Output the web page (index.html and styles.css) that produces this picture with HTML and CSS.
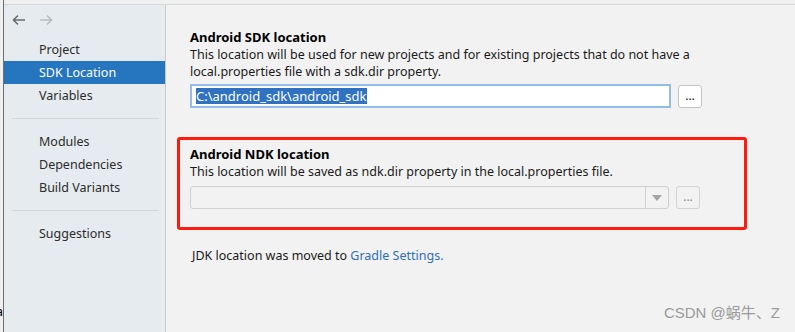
FILE: index.html
```html
<!DOCTYPE html>
<html>
<meta charset="utf-8">
<head>
  <link rel="stylesheet" href="styles.css">
</head>
<body>
  <div class="frame">
    <div class="edge"><span>a</span></div>
    <div class="app">
      <div class="sidebar">
        <div class="nav">
          <svg width="14" height="12" viewBox="0 0 14 12" class="arrow">
            <path d="M13 6H2M6 1.5L1.5 6L6 10.5" fill="none" stroke="#6b6b6b" stroke-width="1.6"/>
          </svg>
          <svg width="14" height="12" viewBox="0 0 14 12" class="arrow">
            <path d="M1 6H12M8 1.5L12.5 6L8 10.5" fill="none" stroke="#b9bcc0" stroke-width="1.6"/>
          </svg>
        </div>
        <div class="item">Project</div>
        <div class="item selected">SDK Location</div>
        <div class="item">Variables</div>
        <div class="sep"></div>
        <div class="item">Modules</div>
        <div class="item">Dependencies</div>
        <div class="item">Build Variants</div>
        <div class="sep"></div>
        <div class="item">Suggestions</div>
      </div>

      <div class="main">
        <div class="section">
          <div class="title">Android SDK location</div>
          <div class="desc">This location will be used for new projects and for existing projects that do not have a<br>local.properties file with a sdk.dir property.</div>
          <div class="row">
            <div class="field focused"><span class="selection">C:\android_sdk\android_sdk</span></div>
            <div class="browse">...</div>
          </div>
        </div>

        <div class="section marked">
          <div class="title">Android NDK location</div>
          <div class="desc">This location will be saved as ndk.dir property in the local.properties file.</div>
          <div class="row">
            <div class="combo">
              <div class="combo-text"></div>
              <div class="combo-arrow"><span class="tri"></span></div>
            </div>
            <div class="browse disabled">...</div>
          </div>
        </div>

        <div class="note">JDK location was moved to <span class="link">Gradle Settings.</span></div>
      </div>
    </div>
  </div>
  <div class="watermark">CSDN @蜗牛、Z</div>
</body>
</html>
```

FILE: styles.css
```css
body {
  margin: 0;
  padding: 0;
  width: 795px;
  height: 332px;
  overflow: hidden;
  background-color: #f0f0f0;
  font-family: "Noto Sans", "Noto Sans CJK SC", sans-serif;
  font-size: 12.5px;
  color: #1a1a1a;
}

.frame {
  display: flex;
  height: 100%;
}

.edge {
  width: 4px;
  border-right: 1px solid #6f6f6f;
  overflow: hidden;
  display: flex;
  justify-content: flex-end;
  align-items: flex-end;
  padding-bottom: 12px;
  box-sizing: border-box;
  flex-shrink: 0;
}

.edge span {
  flex-shrink: 0;
  color: #000;
  font-size: 13px;
}

.app {
  flex: 1;
  display: flex;
  margin-top: 4px;
  border-top: 1px solid #d6d6d6;
}

.sidebar {
  width: 161px;
  background-color: #e6ebf0;
  border-right: 1px solid #c8c8c8;
  flex-shrink: 0;
}

.nav {
  height: 33px;
  display: flex;
  align-items: center;
  gap: 13px;
  padding-left: 8px;
  box-sizing: border-box;
  padding-bottom: 4px;
}

.item {
  height: 23px;
  line-height: 23px;
  padding-left: 35px;
  color: #2b2b2b;
}

.item.selected {
  background-color: #2675bf;
  color: #fff;
}

.sep {
  height: 1px;
  margin: 11px 6px 11px 8px;
  background-color: #d3d7dc;
}

.main {
  flex: 1;
  background-color: #f2f2f2;
  padding: 24px 0 0 11px;
}

.section {
  padding-left: 13px;
  width: 557px;
}

.title {
  font-weight: bold;
  font-size: 13px;
  line-height: 17px;
  color: #000;
}

.desc {
  line-height: 17px;
  color: #1a1a1a;
}

.row {
  display: flex;
  align-items: center;
  margin-top: 4px;
  gap: 7px;
}

.field {
  width: 481px;
  height: 24px;
  box-sizing: border-box;
  background-color: #fff;
  border: 2px solid #93bde9;
  display: flex;
  align-items: center;
  padding-left: 4px;
}

.selection {
  background-color: #2f72c2;
  color: #fff;
  line-height: 16px;
  font-size: 13px;
}

.browse {
  width: 24px;
  height: 23px;
  box-sizing: border-box;
  border: 1px solid #c4c4c4;
  border-radius: 3px;
  background-color: #fff;
  text-align: center;
  line-height: 19px;
  font-size: 12px;
  color: #222;
}

.browse.disabled {
  background-color: #f2f2f2;
  border-color: #d4d4d4;
  color: #8a8a8a;
}

.marked {
  margin-top: 29px;
  border: 3px solid #ff1a10;
  border-radius: 3px;
  padding: 6px 0 18px 10px;
  width: 554px;
}

.marked .row {
  margin-top: 6px;
}

.combo {
  width: 479px;
  height: 23px;
  box-sizing: border-box;
  border: 1px solid #d0d0d0;
  border-radius: 3px;
  display: flex;
}

.combo-text {
  flex: 1;
}

.combo-arrow {
  width: 22px;
  border-left: 1px solid #d0d0d0;
  display: flex;
  align-items: center;
  justify-content: center;
}

.tri {
  width: 0;
  height: 0;
  border-left: 5px solid transparent;
  border-right: 5px solid transparent;
  border-top: 6px solid #a3a3a3;
}

.note {
  margin-top: 17px;
  padding-left: 15px;
  line-height: 17px;
  color: #1a1a1a;
}

.link {
  color: #2f6fb6;
}

.watermark {
  position: absolute;
  right: 15px;
  bottom: 10px;
  font-family: "Liberation Sans", "Noto Sans CJK SC", sans-serif;
  font-size: 15px;
  color: #9a9a9a;
}
```
